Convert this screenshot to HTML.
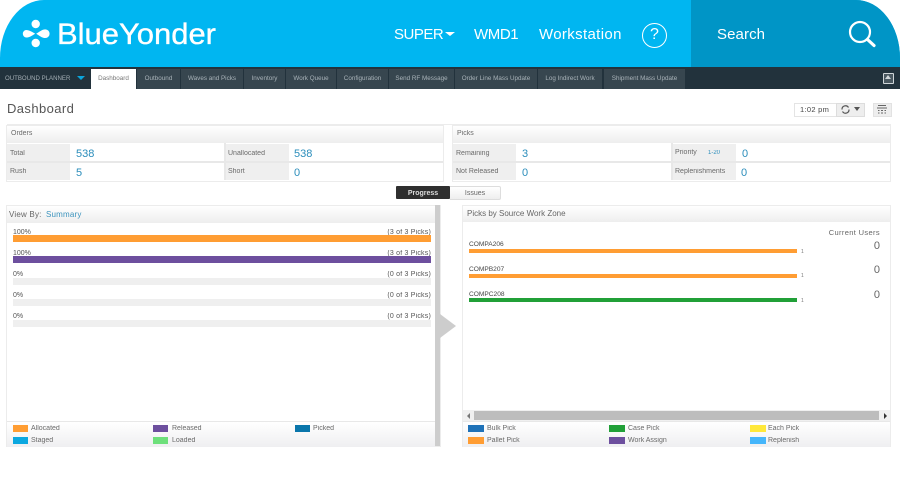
<!DOCTYPE html>
<html><head><meta charset="utf-8"><style>
html,body{margin:0;padding:0;background:#fff;}
#p{position:relative;width:900px;height:493px;overflow:hidden;background:#fff;font-family:"Liberation Sans",sans-serif;color:#555;}
#p div,#p span.a{position:absolute;white-space:nowrap;}
.t{font-size:7px;color:#6a6a6a;line-height:10px;filter:blur(.3px);}
.n{font-size:11px;color:#2a8dbb;line-height:14px;filter:blur(.2px);}
.tab{top:69px;height:20px;background:#37464f;color:#a9b3b9;font-size:6.300px;line-height:20px;text-align:center;filter:blur(.2px);}
.hd{background:linear-gradient(#fff,#eeeeee);}
.lab{background:#efefef;}
.sw{width:15px;height:7px;}
.bar{left:13px;width:418px;height:7px;background:#efefef;}
.pc{left:13px;font-size:7px;color:#555;line-height:9px;filter:blur(.2px);}
.pk{right:469px;font-size:7px;color:#555;line-height:9px;letter-spacing:.2px;filter:blur(.2px);}
.hw{color:#fff;font-size:15px;line-height:20px;top:25px;}
.z{left:469px;font-size:6.600px;color:#444;line-height:9px;filter:blur(.2px);}
.zb{left:469px;width:328px;height:4px;}
.one{left:801px;font-size:5px;color:#777;line-height:6px;}
.u{right:20px;font-size:11px;color:#666;line-height:12px;}
</style></head><body><div id="p">
<div style="left:0;top:0;width:900px;height:68px;background:#00b6f1;border-radius:44px 44px 0 0/58px 58px 0 0;overflow:hidden">
<div style="left:691px;top:0;width:209px;height:68px;background:#0095c6"></div>
</div>
<svg style="position:absolute;left:20px;top:18px" width="32" height="32" viewBox="0 0 32 32"><g fill="#fff"><circle cx="15.700" cy="6" r="4.200"/><circle cx="15.700" cy="25" r="4.200"/><path d="M15.200 15.700C12 14 9.500 12 6 12A3.800 3.800 0 0 0 6 19.500C9.500 19.500 12 17.500 15.200 15.700Z"/><path d="M16.200 15.700C19.500 13.800 22 11.400 25.300 11.400A4.300 4.300 0 0 1 25.300 20C22 20 19.500 17.600 16.200 15.700Z"/></g></svg>
<div style="left:56px;top:14px;width:164px;height:38px"><svg width="164" height="38" style="display:block"><text x="1" y="30" font-family="Liberation Sans" font-size="30" fill="#fff" stroke="#fff" stroke-width=".35" textLength="159" lengthAdjust="spacingAndGlyphs">BlueYonder</text></svg></div>
<div class="hw" style="left:394px;letter-spacing:-.5px">SUPER</div>
<div style="left:445px;top:32px;width:0;height:0;border-left:5px solid transparent;border-right:5px solid transparent;border-top:4px solid #fff"></div>
<div class="hw" style="left:474px;letter-spacing:-.4px">WMD1</div>
<div class="hw" style="left:539px;letter-spacing:.35px">Workstation</div>
<div style="left:642px;top:23px;width:23px;height:23px;border:1.500px solid #fff;border-radius:50%;color:#fff;text-align:center;font-size:16px;line-height:22px">?</div>
<div class="hw" style="left:717px;letter-spacing:.1px">Search</div>
<svg style="position:absolute;left:847px;top:19px" width="30" height="30" viewBox="0 0 30 30"><circle cx="13" cy="13" r="10" fill="none" stroke="#fff" stroke-width="2.200"/><path d="M20.500 20.500L27 26.500" stroke="#fff" stroke-width="3.200" stroke-linecap="round"/></svg>

<div style="left:0;top:67px;width:900px;height:22px;background:#22323c"></div>
<div style="left:5px;top:74px;font-size:6.100px;line-height:10px;color:#a3adb3;filter:blur(.2px)">OUTBOUND PLANNER</div>
<div style="left:77px;top:76px;width:0;height:0;border-left:4px solid transparent;border-right:4px solid transparent;border-top:4px solid #0ba5dc"></div>
<div class="tab" style="left:91px;width:45px;background:#fff;color:#777">Dashboard</div>
<div class="tab" style="left:137px;width:43px">Outbound</div>
<div class="tab" style="left:181px;width:62px">Waves and Picks</div>
<div class="tab" style="left:244px;width:41px">Inventory</div>
<div class="tab" style="left:286px;width:50px">Work Queue</div>
<div class="tab" style="left:337px;width:51px">Configuration</div>
<div class="tab" style="left:389px;width:65px">Send RF Message</div>
<div class="tab" style="left:455px;width:82px">Order Line Mass Update</div>
<div class="tab" style="left:538px;width:64px">Log Indirect Work</div>
<div class="tab" style="left:604px;width:81px">Shipment Mass Update</div>
<div style="left:883px;top:73px;width:9px;height:9px;border:1px solid #cfd5d8;background:#4a5860;border-radius:1px"></div>
<div style="left:885px;top:75px;width:0;height:0;border-left:3.500px solid transparent;border-right:3.500px solid transparent;border-bottom:4px solid #cfd5d8"></div>

<div style="left:7px;top:101px;font-size:13px;line-height:16px;color:#555;letter-spacing:.4px">Dashboard</div>
<div style="left:7px;top:124px;width:884px;height:1px;background:#ececec"></div>

<div style="left:794px;top:103px;width:68px;height:12px;border:1px solid #e4e4e4;background:#fff"></div>
<div style="left:800px;top:105px;font-size:7.500px;line-height:10px;color:#444;letter-spacing:.3px">1:02 pm</div>
<div style="left:836px;top:103px;width:27px;height:12px;border:1px solid #ddd;background:#eee"></div>
<svg style="position:absolute;left:840px;top:104px" width="11" height="11" viewBox="0 0 11 11"><path d="M2 5.500A3.500 3.500 0 0 1 8.500 3.500M9 5.500A3.500 3.500 0 0 1 2.500 7.500" fill="none" stroke="#555" stroke-width="1.200"/></svg>
<div style="left:854px;top:107px;width:0;height:0;border-left:3px solid transparent;border-right:3px solid transparent;border-top:4px solid #555"></div>
<div style="left:873px;top:103px;width:17px;height:12px;background:#eee;border:1px solid #e2e2e2"></div>
<svg style="position:absolute;left:876px;top:104px" width="12" height="11" viewBox="0 0 12 11"><path d="M2 1.500H10M1 4H11M2 6.500H3.500M5 6.500H7M8.500 6.500H10M2 9H3.500M5 9H7M8.500 9H10" stroke="#666" stroke-width="1"/></svg>

<!-- Orders -->
<div style="left:6px;top:125px;width:436px;height:55px;border:1px solid #ececec;background:#fff"></div>
<div class="hd" style="left:7px;top:126px;width:436px;height:17px"></div>
<div class="t" style="left:11px;top:129px">Orders</div>
<div class="lab" style="left:7px;top:144px;width:63px;height:17px"></div>
<div class="lab" style="left:7px;top:163px;width:63px;height:17px"></div>
<div class="lab" style="left:226px;top:144px;width:63px;height:17px"></div>
<div class="lab" style="left:226px;top:163px;width:63px;height:17px"></div>
<div style="left:7px;top:161px;width:436px;height:2px;background:#e8e8e8"></div>
<div style="left:224px;top:143px;width:2px;height:37px;background:#e8e8e8"></div>
<div class="t" style="left:10px;top:149px">Total</div>
<div class="t" style="left:10px;top:167px">Rush</div>
<div class="t" style="left:228px;top:149px">Unallocated</div>
<div class="t" style="left:228px;top:167px">Short</div>
<div class="n" style="left:76px;top:147px">538</div>
<div class="n" style="left:76px;top:166px">5</div>
<div class="n" style="left:294px;top:147px">538</div>
<div class="n" style="left:294px;top:166px">0</div>

<!-- Picks -->
<div style="left:452px;top:125px;width:437px;height:55px;border:1px solid #ececec;background:#fff"></div>
<div class="hd" style="left:453px;top:126px;width:437px;height:17px"></div>
<div class="t" style="left:457px;top:129px">Picks</div>
<div class="lab" style="left:453px;top:144px;width:63px;height:17px"></div>
<div class="lab" style="left:453px;top:163px;width:63px;height:17px"></div>
<div class="lab" style="left:673px;top:144px;width:63px;height:17px"></div>
<div class="lab" style="left:673px;top:163px;width:63px;height:17px"></div>
<div style="left:453px;top:161px;width:437px;height:2px;background:#e8e8e8"></div>
<div style="left:671px;top:143px;width:2px;height:37px;background:#e8e8e8"></div>
<div class="t" style="left:456px;top:149px">Remaining</div>
<div class="t" style="left:456px;top:167px">Not Released</div>
<div class="t" style="left:675px;top:148px">Priority</div>
<div class="t" style="left:708px;top:148px;color:#2a8dbb;font-size:6px">1-20</div>
<div class="t" style="left:675px;top:167px">Replenishments</div>
<div class="n" style="left:522px;top:147px">3</div>
<div class="n" style="left:522px;top:166px">0</div>
<div class="n" style="left:742px;top:147px">0</div>
<div class="n" style="left:741px;top:166px">0</div>

<!-- Toggle -->
<div style="left:396px;top:186px;width:54px;height:13px;background:#2f2f2f;border-radius:1px;color:#ddd;font-size:7px;line-height:15px;text-align:center;font-weight:bold">Progress</div>
<div style="left:450px;top:186px;width:50px;height:12px;background:linear-gradient(#fff,#eee);border:1px solid #ddd;border-left:0;border-radius:0 2px 2px 0;color:#666;font-size:7px;line-height:14px;text-align:center">Issues</div>

<!-- Left panel -->
<div style="left:6px;top:205px;width:433px;height:240px;border:1px solid #ececec;background:#fff"></div>
<div class="hd" style="left:7px;top:206px;width:428px;height:17px"></div>
<div style="left:9px;top:210px;font-size:8px;line-height:10px;color:#666;letter-spacing:.2px">View By:</div>
<div style="left:46px;top:210px;font-size:8px;line-height:10px;color:#3b93bd;letter-spacing:.2px">Summary</div>
<div style="left:435px;top:205px;width:5px;height:241px;background:#cdcdcd"></div>
<div style="left:440px;top:314px;width:0;height:0;border-top:12px solid transparent;border-bottom:12px solid transparent;border-left:16px solid #cdcdcd"></div>

<div class="pc" style="top:228px">100%</div><div class="pk" style="top:228px">(3 of 3 Picks)</div>
<div class="bar" style="top:235px;background:#ff9d33"></div>
<div class="pc" style="top:249px">100%</div><div class="pk" style="top:249px">(3 of 3 Picks)</div>
<div class="bar" style="top:256px;background:#6d4f9e"></div>
<div class="pc" style="top:270px">0%</div><div class="pk" style="top:270px">(0 of 3 Picks)</div>
<div class="bar" style="top:278px"></div>
<div class="pc" style="top:291px">0%</div><div class="pk" style="top:291px">(0 of 3 Picks)</div>
<div class="bar" style="top:299px"></div>
<div class="pc" style="top:312px">0%</div><div class="pk" style="top:312px">(0 of 3 Picks)</div>
<div class="bar" style="top:320px"></div>

<div style="left:7px;top:421px;width:428px;height:26px;background:linear-gradient(#fff,#efeff1);border-top:1px solid #e8e8e8;box-sizing:border-box"></div>
<div class="sw" style="left:13px;top:425px;background:#ff9d33"></div><div class="t" style="left:31px;top:424px">Allocated</div>
<div class="sw" style="left:153px;top:425px;background:#6d4f9e"></div><div class="t" style="left:172px;top:424px">Released</div>
<div class="sw" style="left:295px;top:425px;background:#0a76ab"></div><div class="t" style="left:313px;top:424px">Picked</div>
<div class="sw" style="left:13px;top:437px;background:#0ca8e0"></div><div class="t" style="left:31px;top:436px">Staged</div>
<div class="sw" style="left:153px;top:437px;background:#6ee07b"></div><div class="t" style="left:172px;top:436px">Loaded</div>

<!-- Right panel -->
<div style="left:462px;top:205px;width:427px;height:240px;border:1px solid #ececec;background:#fff"></div>
<div class="hd" style="left:463px;top:206px;width:427px;height:16px"></div>
<div style="left:467px;top:209px;font-size:8px;line-height:10px;color:#666">Picks by Source Work Zone</div>
<div style="right:20px;top:228px;font-size:7.500px;line-height:10px;color:#666;letter-spacing:.35px">Current Users</div>
<div class="z" style="top:240px">COMPA206</div><div class="zb" style="top:249px;background:#ff9d33"></div><div class="one" style="top:249px">1</div><div class="u" style="top:240px">0</div>
<div class="z" style="top:265px">COMPB207</div><div class="zb" style="top:274px;background:#ff9d33"></div><div class="one" style="top:273px">1</div><div class="u" style="top:264px">0</div>
<div class="z" style="top:290px">COMPC208</div><div class="zb" style="top:298px;background:#21a038"></div><div class="one" style="top:298px">1</div><div class="u" style="top:289px">0</div>

<div style="left:463px;top:410px;width:427px;height:11px;background:#f0f0f0"></div>
<div style="left:474px;top:411px;width:405px;height:9px;background:#bdbdbd"></div>
<div style="left:467px;top:413px;width:0;height:0;border-top:3px solid transparent;border-bottom:3px solid transparent;border-right:3px solid #777"></div>
<div style="left:884px;top:413px;width:0;height:0;border-top:3px solid transparent;border-bottom:3px solid transparent;border-left:3px solid #333"></div>

<div style="left:463px;top:421px;width:427px;height:26px;background:linear-gradient(#fff,#efeff1);border-top:1px solid #e8e8e8;box-sizing:border-box"></div>
<div class="sw" style="left:468px;top:425px;width:16px;background:#1f72b8"></div><div class="t" style="left:487px;top:424px">Bulk Pick</div>
<div class="sw" style="left:609px;top:425px;width:16px;background:#21a038"></div><div class="t" style="left:628px;top:424px">Case Pick</div>
<div class="sw" style="left:750px;top:425px;width:16px;background:#ffe83a"></div><div class="t" style="left:768px;top:424px">Each Pick</div>
<div class="sw" style="left:468px;top:437px;width:16px;background:#ff9d33"></div><div class="t" style="left:487px;top:436px">Pallet Pick</div>
<div class="sw" style="left:609px;top:437px;width:16px;background:#6d4f9e"></div><div class="t" style="left:628px;top:436px">Work Assign</div>
<div class="sw" style="left:750px;top:437px;width:16px;background:#45b6fb"></div><div class="t" style="left:768px;top:436px">Replenish</div>
</div></body></html>
